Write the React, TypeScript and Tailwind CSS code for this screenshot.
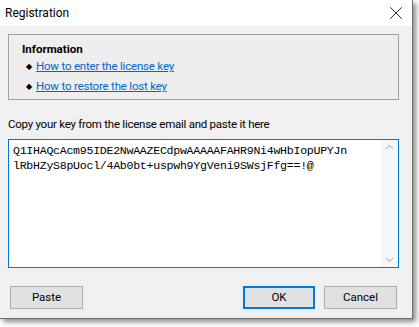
import { X } from 'lucide-react'

const ui = { fontFamily: 'Roboto, "Liberation Sans", Arial, sans-serif' }
const mono = { fontFamily: '"Liberation Mono", "Courier New", monospace' }

const keyLines = [
  'Q1IHAQcAcm95IDE2NwAAZECdpwAAAAAFAHR9Ni4wHbIopUPYJn',
  'lRbHZyS8pUocl/4Ab0bt+uspwh9YgVeni9SWsjFfg==!@',
]

function InfoLink({ label }: { label: string }) {
  return (
    <div className="flex items-center h-[20px]">
      <span className="w-[14px] pl-[4px] text-[8px] text-black leading-none">◆</span>
      <a className="text-[11.5px] tracking-[-0.2px] text-[#0066cc] underline underline-offset-1">
        {label}
      </a>
    </div>
  )
}

function DlgButton({ label, primary }: { label: string; primary?: boolean }) {
  return (
    <button
      className={
        primary
          ? 'w-[72px] h-[23px] bg-[#e1e1e1] border-2 border-[#0078d7] text-[11.5px] text-black'
          : 'w-[73px] h-[23px] bg-[#e1e1e1] border border-[#adadad] text-[11.5px] text-black'
      }
    >
      {label}
    </button>
  )
}

export default function App() {
  return (
    <div className="w-[419px] h-[327px] bg-white overflow-hidden" style={ui}>
      <div className="w-[413px] h-[319px] bg-[#f0f0f0] border-r border-b border-[#6d6d6d] shadow-[3px_3px_5px_rgba(0,0,0,0.45)] flex flex-col">
        {/* title bar */}
        <div className="h-[26px] bg-white flex items-center justify-between pl-[5px] pr-[5px]">
          <span className="text-[12px] text-black">Registration</span>
          <X size={22} strokeWidth={0.9} className="text-black" />
        </div>

        <div className="px-[8px] pr-[13px] pt-[8px]">
          {/* info box */}
          <div className="h-[66px] border border-[#a0a0a0] bg-[#eeeeee] pl-[13px] pt-[6px]">
            <div className="text-[11.5px] font-bold text-black leading-[16px]">Information</div>
            <InfoLink label="How to enter the license key" />
            <InfoLink label="How to restore the lost key" />
          </div>

          <div className="mt-[16px] text-[11.5px] tracking-[-0.25px] text-black leading-[16px]">
            Copy your key from the license email and paste it here
          </div>

          {/* key field */}
          <div className="mt-[7px] h-[129px] border border-[#0078d7] bg-white flex">
            <div
              className="flex-1 pl-[4px] pt-[3px] text-[11.6px] tracking-[-0.28px] leading-[15px] text-black"
              style={mono}
            >
              {keyLines.map((l) => (
                <div key={l} className="whitespace-pre">
                  {l}
                </div>
              ))}
            </div>
            <div className="w-[17px] bg-[#f7f7f7] flex flex-col items-center justify-between py-[4px] text-[#c2c2c2]">
              <svg width="9" height="6" viewBox="0 0 9 6">
                <path d="M1 5 L4.5 1.5 L8 5" fill="none" stroke="currentColor" strokeWidth="1.2" />
              </svg>
              <svg width="9" height="6" viewBox="0 0 9 6">
                <path d="M1 1 L4.5 4.5 L8 1" fill="none" stroke="currentColor" strokeWidth="1.2" />
              </svg>
            </div>
          </div>

          {/* buttons */}
          <div className="mt-[18px] flex items-center pl-[2px]">
            <DlgButton label="Paste" />
            <div className="flex-1" />
            <DlgButton label="OK" primary />
            <div className="w-[9px]" />
            <DlgButton label="Cancel" />
            <div className="w-[2px]" />
          </div>
        </div>
      </div>
    </div>
  )
}
